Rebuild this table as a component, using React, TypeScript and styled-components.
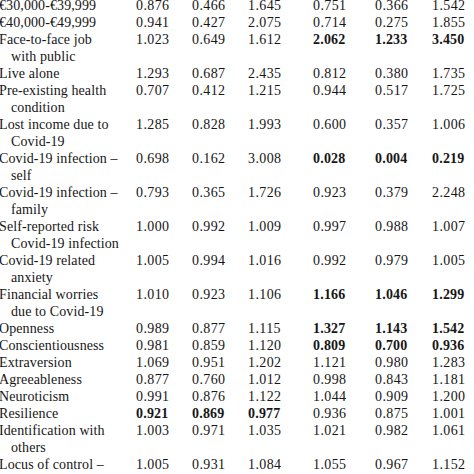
import React from "react";
import styled, { createGlobalStyle } from "styled-components";

const Global = createGlobalStyle`
  html, body { margin: 0; padding: 0; background: #ffffff; overflow: hidden; }
  body { font-family: "Liberation Serif", "Times New Roman", serif; color: #161616; }
`;

const Table = styled.div`
  display: grid;
  grid-template-columns: 137px 56px 56px 65px 62px 57px 1fr;
  margin-top: -3px;
  margin-left: -1px;
  font-size: 14px;
  line-height: 17px;
`;

const Label = styled.div`
  display: flex;
  flex-direction: column;
  white-space: nowrap;
  letter-spacing: 0.1px;
`;

const Cont = styled.span`
  padding-left: 12px;
`;

const Num = styled.div<{ $bold?: boolean }>`
  font-weight: ${(p) => (p.$bold ? 700 : 400)};
  letter-spacing: ${(p) => (p.$bold ? "0.2px" : "0.4px")};
  white-space: nowrap;
`;

type Row = { label: string[]; v: string[]; bold?: number[] };

const rows: Row[] = [
  { label: ["€30,000-€39,999"], v: ["0.876", "0.466", "1.645", "0.751", "0.366", "1.542"] },
  { label: ["€40,000-€49,999"], v: ["0.941", "0.427", "2.075", "0.714", "0.275", "1.855"] },
  { label: ["Face-to-face job", "with public"], v: ["1.023", "0.649", "1.612", "2.062", "1.233", "3.450"], bold: [3, 4, 5] },
  { label: ["Live alone"], v: ["1.293", "0.687", "2.435", "0.812", "0.380", "1.735"] },
  { label: ["Pre-existing health", "condition"], v: ["0.707", "0.412", "1.215", "0.944", "0.517", "1.725"] },
  { label: ["Lost income due to", "Covid-19"], v: ["1.285", "0.828", "1.993", "0.600", "0.357", "1.006"] },
  { label: ["Covid-19 infection –", "self"], v: ["0.698", "0.162", "3.008", "0.028", "0.004", "0.219"], bold: [3, 4, 5] },
  { label: ["Covid-19 infection –", "family"], v: ["0.793", "0.365", "1.726", "0.923", "0.379", "2.248"] },
  { label: ["Self-reported risk", "Covid-19 infection"], v: ["1.000", "0.992", "1.009", "0.997", "0.988", "1.007"] },
  { label: ["Covid-19 related", "anxiety"], v: ["1.005", "0.994", "1.016", "0.992", "0.979", "1.005"] },
  { label: ["Financial worries", "due to Covid-19"], v: ["1.010", "0.923", "1.106", "1.166", "1.046", "1.299"], bold: [3, 4, 5] },
  { label: ["Openness"], v: ["0.989", "0.877", "1.115", "1.327", "1.143", "1.542"], bold: [3, 4, 5] },
  { label: ["Conscientiousness"], v: ["0.981", "0.859", "1.120", "0.809", "0.700", "0.936"], bold: [3, 4, 5] },
  { label: ["Extraversion"], v: ["1.069", "0.951", "1.202", "1.121", "0.980", "1.283"] },
  { label: ["Agreeableness"], v: ["0.877", "0.760", "1.012", "0.998", "0.843", "1.181"] },
  { label: ["Neuroticism"], v: ["0.991", "0.876", "1.122", "1.044", "0.909", "1.200"] },
  { label: ["Resilience"], v: ["0.921", "0.869", "0.977", "0.936", "0.875", "1.001"], bold: [0, 1, 2] },
  { label: ["Identification with", "others"], v: ["1.003", "0.971", "1.035", "1.021", "0.982", "1.061"] },
  { label: ["Locus of control –"], v: ["1.005", "0.931", "1.084", "1.055", "0.967", "1.152"] },
];

export default function App() {
  return (
    <>
      <Global />
      <Table>
        {rows.map((r) => (
          <React.Fragment key={r.label.join(" ")}>
            <Label>
              <span>{r.label[0]}</span>
              {r.label.slice(1).map((l) => (
                <Cont key={l}>{l}</Cont>
              ))}
            </Label>
            {r.v.map((n, i) => (
              <Num key={i} $bold={r.bold?.includes(i)}>
                {n}
              </Num>
            ))}
          </React.Fragment>
        ))}
      </Table>
    </>
  );
}
